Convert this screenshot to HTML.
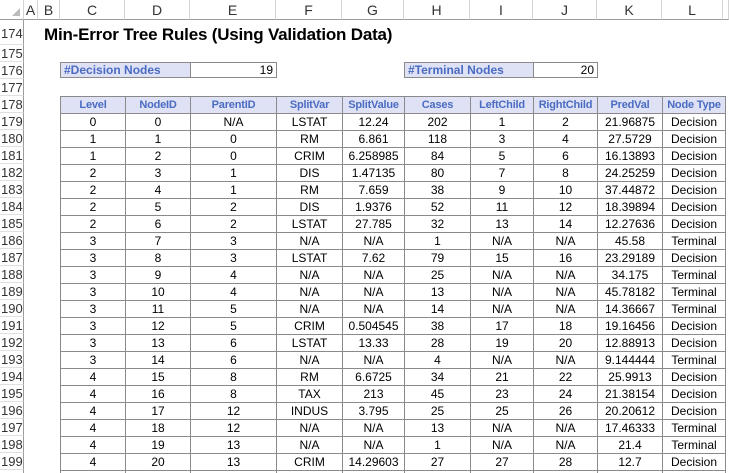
<!DOCTYPE html><html style="overflow:hidden"><head><style>
html,body{width:729px;height:473px;overflow:hidden}
body{margin:0;background:#fff;font-family:"Liberation Sans",sans-serif;position:relative}
.ch{position:absolute;top:0;height:20px;border-right:1px solid #d4d4d4;border-bottom:1px solid #9b9b9b;box-sizing:border-box;text-align:center;font-size:14px;line-height:20px;color:#333;background:#fff}
.rh{position:absolute;left:0;width:24px;border-right:1px solid #9b9b9b;border-bottom:1px solid #e0e0e0;box-sizing:border-box;font-size:13px;color:#333;padding-left:1px}
.t{position:absolute;left:60px;top:96px;border-collapse:collapse;font-size:12px;table-layout:fixed}
.t td{border:1px solid #8a8a8a;height:16px;padding:0;text-align:center;line-height:15px;white-space:nowrap;overflow:hidden}
.t tr.h td{background:#dfe1f5;color:#4a6cc2;font-weight:bold;font-size:11px;letter-spacing:-0.2px}
.box{position:absolute;height:16px;border:1px solid #8a8a8a;box-sizing:border-box;font-size:12px;line-height:15px}
</style></head><body>
<div class="ch" style="left:0;width:24px"><div style="position:absolute;right:3px;bottom:3px;width:0;height:0;border-left:8px solid transparent;border-bottom:8px solid #bbb"></div></div>
<div class="ch" style="left:24px;width:14px">A</div>
<div class="ch" style="left:38px;width:22px">B</div>
<div class="ch" style="left:60px;width:65px">C</div>
<div class="ch" style="left:125px;width:65px">D</div>
<div class="ch" style="left:190px;width:86px">E</div>
<div class="ch" style="left:276px;width:66px">F</div>
<div class="ch" style="left:342px;width:62px">G</div>
<div class="ch" style="left:404px;width:66px">H</div>
<div class="ch" style="left:470px;width:63px">I</div>
<div class="ch" style="left:533px;width:64px">J</div>
<div class="ch" style="left:597px;width:65px">K</div>
<div class="ch" style="left:662px;width:61px">L</div>
<div class="ch" style="left:723px;width:6px"></div>
<div class="rh" style="top:20px;height:25px;line-height:28px">174</div>
<div style="position:absolute;left:44px;top:22px;font-size:17px;font-weight:bold;line-height:25px;color:#000;letter-spacing:-0.2px">Min-Error Tree Rules (Using Validation Data)</div>
<div class="box" style="left:60px;top:62px;width:131px;background:#dfe1f5;color:#4a6cc2;font-weight:bold;padding-left:3px">#Decision Nodes</div>
<div class="box" style="left:190px;top:62px;width:87px;text-align:right;padding-right:3px">19</div>
<div class="box" style="left:404px;top:62px;width:130px;background:#dfe1f5;color:#4a6cc2;font-weight:bold;padding-left:3px">#Terminal Nodes</div>
<div class="box" style="left:533px;top:62px;width:65px;text-align:right;padding-right:3px">20</div>
<table class="t"><colgroup><col style="width:65px"><col style="width:65px"><col style="width:86px"><col style="width:66px"><col style="width:62px"><col style="width:66px"><col style="width:63px"><col style="width:64px"><col style="width:65px"><col style="width:63px"></colgroup>
<tr class="h"><td>Level</td><td>NodeID</td><td>ParentID</td><td>SplitVar</td><td>SplitValue</td><td>Cases</td><td>LeftChild</td><td>RightChild</td><td>PredVal</td><td>Node Type</td></tr>
<tr><td>0</td><td>0</td><td>N/A</td><td>LSTAT</td><td>12.24</td><td>202</td><td>1</td><td>2</td><td>21.96875</td><td>Decision</td></tr>
<tr><td>1</td><td>1</td><td>0</td><td>RM</td><td>6.861</td><td>118</td><td>3</td><td>4</td><td>27.5729</td><td>Decision</td></tr>
<tr><td>1</td><td>2</td><td>0</td><td>CRIM</td><td>6.258985</td><td>84</td><td>5</td><td>6</td><td>16.13893</td><td>Decision</td></tr>
<tr><td>2</td><td>3</td><td>1</td><td>DIS</td><td>1.47135</td><td>80</td><td>7</td><td>8</td><td>24.25259</td><td>Decision</td></tr>
<tr><td>2</td><td>4</td><td>1</td><td>RM</td><td>7.659</td><td>38</td><td>9</td><td>10</td><td>37.44872</td><td>Decision</td></tr>
<tr><td>2</td><td>5</td><td>2</td><td>DIS</td><td>1.9376</td><td>52</td><td>11</td><td>12</td><td>18.39894</td><td>Decision</td></tr>
<tr><td>2</td><td>6</td><td>2</td><td>LSTAT</td><td>27.785</td><td>32</td><td>13</td><td>14</td><td>12.27636</td><td>Decision</td></tr>
<tr><td>3</td><td>7</td><td>3</td><td>N/A</td><td>N/A</td><td>1</td><td>N/A</td><td>N/A</td><td>45.58</td><td>Terminal</td></tr>
<tr><td>3</td><td>8</td><td>3</td><td>LSTAT</td><td>7.62</td><td>79</td><td>15</td><td>16</td><td>23.29189</td><td>Decision</td></tr>
<tr><td>3</td><td>9</td><td>4</td><td>N/A</td><td>N/A</td><td>25</td><td>N/A</td><td>N/A</td><td>34.175</td><td>Terminal</td></tr>
<tr><td>3</td><td>10</td><td>4</td><td>N/A</td><td>N/A</td><td>13</td><td>N/A</td><td>N/A</td><td>45.78182</td><td>Terminal</td></tr>
<tr><td>3</td><td>11</td><td>5</td><td>N/A</td><td>N/A</td><td>14</td><td>N/A</td><td>N/A</td><td>14.36667</td><td>Terminal</td></tr>
<tr><td>3</td><td>12</td><td>5</td><td>CRIM</td><td>0.504545</td><td>38</td><td>17</td><td>18</td><td>19.16456</td><td>Decision</td></tr>
<tr><td>3</td><td>13</td><td>6</td><td>LSTAT</td><td>13.33</td><td>28</td><td>19</td><td>20</td><td>12.88913</td><td>Decision</td></tr>
<tr><td>3</td><td>14</td><td>6</td><td>N/A</td><td>N/A</td><td>4</td><td>N/A</td><td>N/A</td><td>9.144444</td><td>Terminal</td></tr>
<tr><td>4</td><td>15</td><td>8</td><td>RM</td><td>6.6725</td><td>34</td><td>21</td><td>22</td><td>25.9913</td><td>Decision</td></tr>
<tr><td>4</td><td>16</td><td>8</td><td>TAX</td><td>213</td><td>45</td><td>23</td><td>24</td><td>21.38154</td><td>Decision</td></tr>
<tr><td>4</td><td>17</td><td>12</td><td>INDUS</td><td>3.795</td><td>25</td><td>25</td><td>26</td><td>20.20612</td><td>Decision</td></tr>
<tr><td>4</td><td>18</td><td>12</td><td>N/A</td><td>N/A</td><td>13</td><td>N/A</td><td>N/A</td><td>17.46333</td><td>Terminal</td></tr>
<tr><td>4</td><td>19</td><td>13</td><td>N/A</td><td>N/A</td><td>1</td><td>N/A</td><td>N/A</td><td>21.4</td><td>Terminal</td></tr>
<tr><td>4</td><td>20</td><td>13</td><td>CRIM</td><td>14.29603</td><td>27</td><td>27</td><td>28</td><td>12.7</td><td>Decision</td></tr>
<tr><td>&nbsp;</td><td></td><td></td><td></td><td></td><td></td><td></td><td></td><td></td><td></td></tr>
</table>
<div class="rh" style="top:45px;height:17px;line-height:17px">175</div>
<div class="rh" style="top:62px;height:17px;line-height:17px">176</div>
<div class="rh" style="top:79px;height:17px;line-height:17px">177</div>
<div class="rh" style="top:96px;height:17px;line-height:17px">178</div>
<div class="rh" style="top:113px;height:17px;line-height:17px">179</div>
<div class="rh" style="top:130px;height:17px;line-height:17px">180</div>
<div class="rh" style="top:147px;height:17px;line-height:17px">181</div>
<div class="rh" style="top:164px;height:17px;line-height:17px">182</div>
<div class="rh" style="top:181px;height:17px;line-height:17px">183</div>
<div class="rh" style="top:198px;height:17px;line-height:17px">184</div>
<div class="rh" style="top:215px;height:17px;line-height:17px">185</div>
<div class="rh" style="top:232px;height:17px;line-height:17px">186</div>
<div class="rh" style="top:249px;height:17px;line-height:17px">187</div>
<div class="rh" style="top:266px;height:17px;line-height:17px">188</div>
<div class="rh" style="top:283px;height:17px;line-height:17px">189</div>
<div class="rh" style="top:300px;height:17px;line-height:17px">190</div>
<div class="rh" style="top:317px;height:17px;line-height:17px">191</div>
<div class="rh" style="top:334px;height:17px;line-height:17px">192</div>
<div class="rh" style="top:351px;height:17px;line-height:17px">193</div>
<div class="rh" style="top:368px;height:17px;line-height:17px">194</div>
<div class="rh" style="top:385px;height:17px;line-height:17px">195</div>
<div class="rh" style="top:402px;height:17px;line-height:17px">196</div>
<div class="rh" style="top:419px;height:17px;line-height:17px">197</div>
<div class="rh" style="top:436px;height:17px;line-height:17px">198</div>
<div class="rh" style="top:453px;height:17px;line-height:17px">199</div>
<div class="rh" style="top:470px;height:17px;line-height:17px"></div>
</body></html>
